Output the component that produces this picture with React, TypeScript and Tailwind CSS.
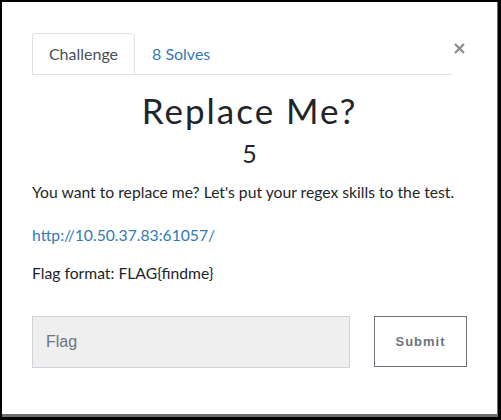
export default function App() {
  return (
    <div className="w-[501px] h-[420px] bg-black pt-[2px] pl-[2px] pr-[3px] pb-[3px] flex">
      <div
        className="flex-1 bg-white border-r border-b-[3px] border-[#6e6e6e] pt-[31px] pl-[30px] pr-[30px] text-[#212529]"
        style={{ fontFamily: "Lato, 'Open Sans', sans-serif" }}
      >
        {/* Tabs */}
        <div className="flex items-start">
          <div className="w-[420px] flex border-b border-[#dee2e6]">
            <div className="w-[103px] h-[41px] flex items-center justify-center border border-[#dee2e6] border-b-0 rounded-t-[4px] -mb-px bg-white text-[16px] text-[#495057]">
              Challenge
            </div>
            <div className="h-[41px] px-[17px] flex items-center text-[16px] text-[#337ab7]">
              8 Solves
            </div>
          </div>
          <button className="ml-[1px] mt-[9px] w-[12px] h-[12px] flex items-center justify-center">
            <svg width="11" height="11" viewBox="0 0 11 11">
              <path d="M1 1 L10 10 M10 1 L1 10" stroke="#8a8a8a" strokeWidth="2.2" />
            </svg>
          </button>
        </div>

        {/* Title */}
        <h2 className="mt-[13px] text-center text-[35px] leading-[44px] tracking-[2px] text-[#212529]">
          Replace Me?
        </h2>
        <h3 className="mt-[6px] text-center text-[25px] leading-[30px] text-[#212529]">5</h3>

        <div className="text-[15.7px] leading-[24px]">
          <p className="mt-[12px]">
            You want to replace me? Let's put your regex skills to the test.
          </p>
          <p className="mt-[19px]">
            <a className="text-[#337ab7]">http://10.50.37.83:61057/</a>
          </p>
          <p className="mt-[14px]">Flag format: FLAG{"{"}findme{"}"}</p>
        </div>

        {/* Submit */}
        <div className="mt-[31px] flex items-start justify-between">
          <input
            placeholder="Flag"
            className="w-[318px] h-[52px] bg-[#efefef] border border-[#ced4da] pl-[13px] text-[16px] placeholder:text-[#6c757d] outline-none"
            style={{ fontFamily: "'Liberation Sans', Arial, sans-serif" }}
          />
          <button
            className="w-[93px] h-[51px] border border-[#6c757d] bg-white text-[13px] font-bold tracking-[1px] text-[#6c757d]"
            style={{ fontFamily: "'Liberation Sans', Arial, sans-serif" }}
          >
            Submit
          </button>
        </div>
      </div>
    </div>
  );
}
